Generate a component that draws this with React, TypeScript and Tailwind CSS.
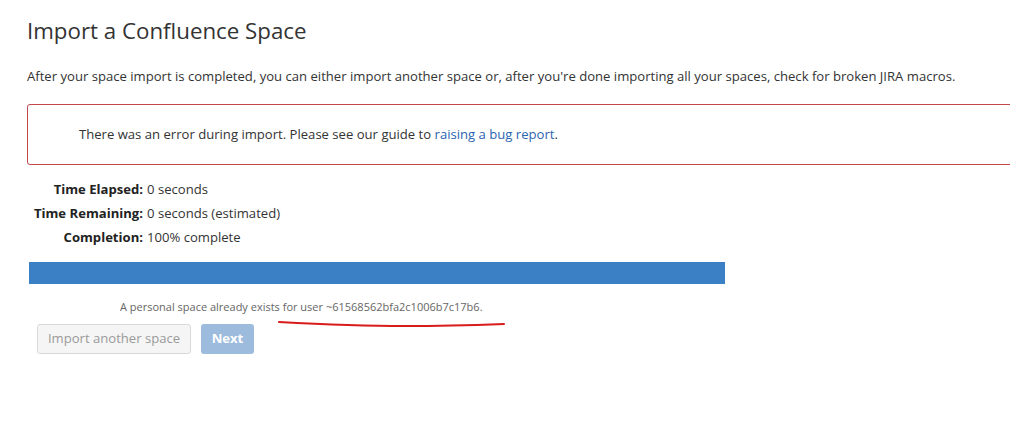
import React from "react";

const STATS = [
  { label: "Time Elapsed:", value: "0 seconds" },
  { label: "Time Remaining:", value: "0 seconds (estimated)" },
  { label: "Completion:", value: "100% complete" },
];

export default function App() {
  return (
    <div
      className="relative h-[441px] w-[1010px] overflow-hidden bg-white text-[#333]"
      style={{ fontFamily: '"Open Sans", "Noto Sans", sans-serif' }}
    >
      <div className="pl-[27px] pt-[15px]">
        <h1 className="text-[22.3px] leading-[32px] font-normal text-[#333]">
          Import a Confluence Space
        </h1>
        <p className="mt-[19px] text-[13.1px] leading-[20px]">
          After your space import is completed, you can either import another space or, after you're done importing all
          your spaces, check for broken JIRA macros.
        </p>

        <div className="mt-[18px] flex h-[61px] w-[1000px] items-center rounded-[3px] border border-[#c0474a] pl-[51px] text-[13.1px]">
          There was an error during import. Please see our guide to&nbsp;
          <a className="text-[#2a64b0]">raising a bug report</a>.
        </div>

        <div className="mt-[13px] flex flex-col">
          {STATS.map((s) => (
            <div key={s.label} className="flex h-[24px] items-center text-[13.1px]">
              <span className="w-[116px] text-right font-bold text-[#222]">{s.label}</span>
              <span className="ml-[4px]">{s.value}</span>
            </div>
          ))}
        </div>

        <div className="ml-[2px] mt-[12px] h-[22px] w-[696px] bg-[#3b7fc4]" />

        <p className="ml-[93px] mt-[14px] text-[11px] leading-[18px] text-[#666]">
          A personal space already exists for user ~61568562bfa2c1006b7c17b6.
        </p>

        <div className="ml-[10px] mt-[8px] flex gap-[10px]">
          <button className="h-[30px] w-[154px] rounded-[3px] border border-[#d9d9d9] bg-[#f5f5f5] text-[13.1px] text-[#9a9a9a]">
            Import another space
          </button>
          <button className="h-[30px] w-[53px] rounded-[3px] bg-[#9dbbdd] text-[13.1px] font-bold text-white">
            Next
          </button>
        </div>
      </div>

      <svg
        className="absolute left-[276px] top-[318px]"
        width="232"
        height="14"
        viewBox="0 0 232 14"
        fill="none"
      >
        <path
          d="M3 4 C 40 6, 90 8, 130 8 C 170 8, 200 7, 228 6"
          stroke="#d81b1b"
          strokeWidth="2"
          strokeLinecap="round"
        />
      </svg>
    </div>
  );
}
